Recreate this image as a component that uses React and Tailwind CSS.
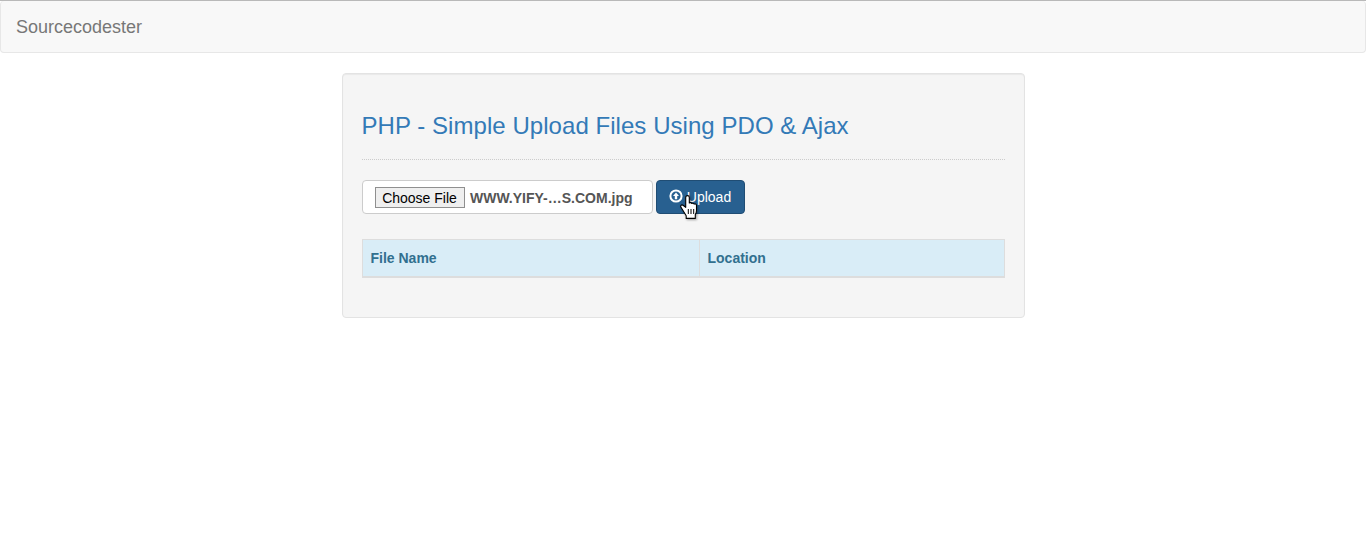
export default function App() {
  return (
    <div className="min-h-[557px] bg-white font-['Liberation_Sans',Arial,sans-serif] text-[14px] text-[#333]">
      <div className="h-px bg-[#b9b9b9]" />
      <nav className="flex h-[52px] items-center rounded-[4px] border border-t-0 border-[#e7e7e7] bg-[#f8f8f8] px-[15px]">
        <span className="text-[18px] leading-5 text-[#777]">Sourcecodester</span>
      </nav>
      <main className="mx-auto mt-5 h-[245px] w-[683px] rounded-[4px] border border-[#e3e3e3] bg-[#f5f5f5] px-[19px] pt-[19px] shadow-[inset_0_1px_1px_rgba(0,0,0,0.05)]">
        <h3 className="mt-[20px] mb-[10px] text-[24px] leading-[26px] tracking-[0.05px] text-[#337ab7]">PHP - Simple Upload Files Using PDO &amp; Ajax</h3>
        <hr className="mt-[20px] mb-[20px] border-0 border-t border-dotted border-[#ccc]" />
        <div className="flex items-start gap-[3px]">
          <div className="flex h-[34px] w-[291px] items-center rounded-[4px] border border-[#ccc] bg-white pl-[12px]">
            <span className="flex h-[21px] w-[90px] items-center justify-center border border-[#8f8f8f] bg-[#efefef] pt-px text-[14px] leading-none text-black">Choose File</span>
            <span className="ml-[5.5px] whitespace-nowrap pt-[2px] text-[14px] font-bold text-[#555]">WWW.YIFY-…S.COM.jpg</span>
          </div>
          <button className="relative flex h-[34px] w-[89px] items-center justify-center gap-[4px] rounded-[4px] border border-[#204d74] bg-[#286090] text-white">
            <svg width="14" height="14" viewBox="0 0 14 14" className="-mt-[3px]">
              <circle cx="7" cy="7" r="5.6" fill="none" stroke="white" strokeWidth="2" />
              <path d="M7 3.4 10 7H8.2v3.2H5.8V7H4z" fill="white" />
            </svg>
            <span>Upload</span>
            <svg width="18" height="25" viewBox="0 0 18 25" className="absolute left-[23px] top-[14px] drop-shadow-[1px_1px_1px_rgba(0,0,0,0.35)]">
              <path d="M7.5.6C8.6.6 9.3 1.3 9.3 2.4V8c.7-.6 2.1-.5 2.5.5.7-.5 1.9-.3 2.3.6.8-.4 2.4 0 2.4 1.3v5.1c0 1.7-.5 3-1.2 4.1v3.8H6.2v-2.6L1 12.2c-1-1.4.5-3 2-1.9l2.7 2V2.4C5.7 1.3 6.4.6 7.5.6z" fill="white" stroke="black" strokeWidth="1.1" strokeLinejoin="round" />
              <path d="M8.3 14v5M11 14v5M13.7 14v5" stroke="black" strokeWidth="1" fill="none" />
            </svg>
          </button>
        </div>
        <table className="mt-[25px] w-full table-fixed border-collapse">
          <thead>
            <tr className="h-[37px] bg-[#d9edf7] text-left text-[14px] font-bold text-[#31708f]">
              <th className="w-[337px] border border-b-2 border-[#ddd] px-[8px] pt-[2px]">File Name</th>
              <th className="border border-b-2 border-[#ddd] px-[8px] pt-[2px]">Location</th>
            </tr>
          </thead>
        </table>
      </main>
    </div>
  );
}
